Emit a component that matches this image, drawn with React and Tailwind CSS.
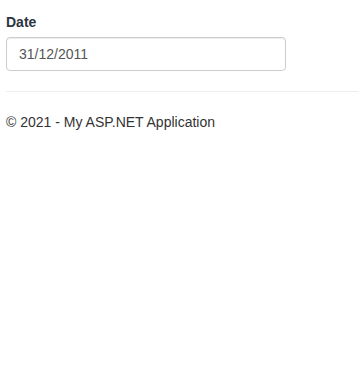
export default function App() {
  return (
    <div className="pl-[6px] pt-[12px] text-[14px] leading-[20px] text-[#333] font-['Liberation_Sans',Arial,sans-serif] bg-white min-h-[371px]">
      {/* Form */}
      <div className="mb-[15px]">
        <label className="inline-block mb-[5px] font-bold text-[#2b3542]">Date</label>
        <input
          type="text"
          defaultValue="31/12/2011"
          className="block w-full max-w-[280px] h-[34px] px-[12px] py-[6px] text-[14px] leading-[20px] text-[#555] bg-white border border-[#ccc] rounded-[4px] shadow-[inset_0_1px_1px_rgba(0,0,0,0.075)] outline-none"
        />
      </div>

      <hr className="mt-[20px] mb-[20px] border-0 border-t border-[#eee]" />

      {/* Footer */}
      <footer>
        <p className="mb-[10px]">© 2021 - My ASP.NET Application</p>
      </footer>
    </div>
  )
}
